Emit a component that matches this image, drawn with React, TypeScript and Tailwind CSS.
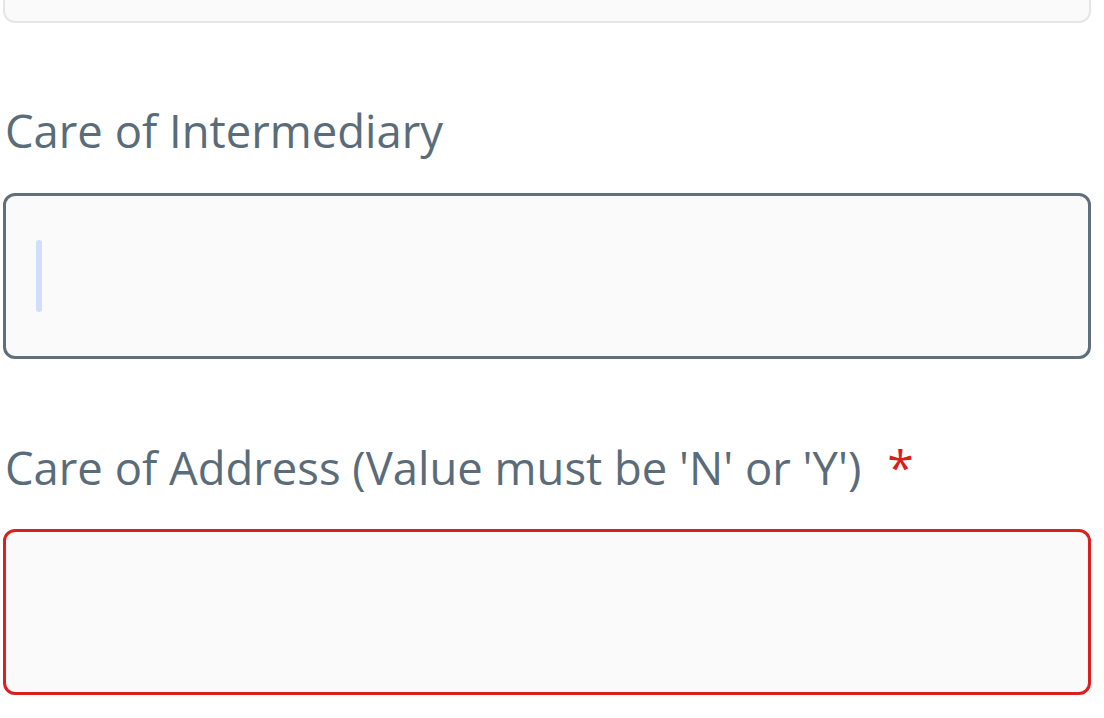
export default function App() {
  return (
    <div
      className="min-h-screen bg-white pl-[3px] pr-[13px] text-[#5a6c79]"
      style={{ fontFamily: '"Open Sans", "Liberation Sans", sans-serif' }}
    >
      <div className="h-[23px] rounded-b-[12px] border-2 border-t-0 border-[#e6e6e6] bg-[#fafafa]" />

      <label className="mt-[74px] block pl-[2px] text-[45.4px] leading-[67px]">
        Care of Intermediary
      </label>
      <div className="mt-[29px] flex h-[166px] items-center rounded-[12px] border-[3px] border-[#5f707c] bg-[#fafafa] pl-[30px]">
        <span className="block h-[72px] w-[6px] rounded-full bg-[#d2dcfb]" />
      </div>

      <label className="mt-[74px] flex items-baseline pl-[2px] text-[45.4px] leading-[67px]">
        Care of Address (Value must be 'N' or 'Y')
        <span className="ml-[26px] text-[48px] text-[#dd1c1c]">*</span>
      </label>
      <div className="mt-[28px] h-[166px] rounded-[12px] border-[3px] border-[#dc1f1f] bg-[#fafafa]" />
    </div>
  );
}
